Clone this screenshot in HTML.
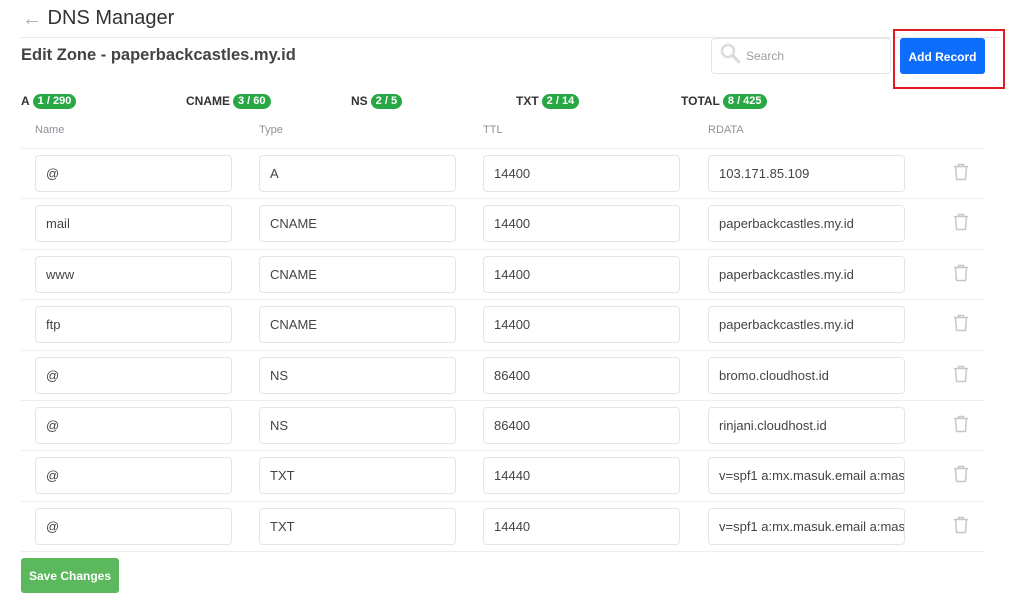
<!DOCTYPE html>
<html><head><meta charset="utf-8"><style>
*{box-sizing:border-box;margin:0;padding:0}
body{width:1024px;height:615px;background:#fff;font-family:"Liberation Sans",Arial,sans-serif;color:#333;position:relative;overflow:hidden}
.abs{position:absolute}
.inp{position:absolute;height:37px;border:1px solid #e3e5e8;border-radius:4px;font-size:13px;color:#444;padding:0 0 0 10px;line-height:35px;white-space:nowrap;overflow:hidden;width:197px}
.sep{position:absolute;left:21px;width:963px;height:1px;background:#eceef1}
.badge{display:inline-block;background:#28a745;color:#fff;font-size:11px;font-weight:bold;border-radius:8px;padding:0 5px;height:15px;line-height:15px;vertical-align:1px;margin-left:3px}
.stat{position:absolute;top:94px;font-size:12px;font-weight:bold;color:#333}
.lbl{position:absolute;top:124px;font-size:11px;color:#8a9199}
</style></head><body>
<div class="abs" style="left:22px;top:7px;font-size:20px;color:#333"><span style="color:#aaa;font-size:20px;position:relative;top:1px">&#8592;</span> DNS Manager</div>
<div class="abs" style="left:21px;top:37px;width:980px;height:1px;background:#e8e8e8"></div>
<div class="abs" style="left:21px;top:46px;font-size:16.5px;font-weight:bold;color:#444">Edit Zone - paperbackcastles.my.id</div>
<div class="abs" style="left:711px;top:38px;width:180px;height:36px;border:1px solid #e3e5e8;border-radius:4px"></div>
<svg class="abs" style="left:719px;top:42px" width="24" height="22" viewBox="0 0 24 22"><circle cx="9" cy="9" r="6" fill="none" stroke="#dadde0" stroke-width="2.5"/><path d="M13.5 13.5l6 6" stroke="#dadde0" stroke-width="3.5" stroke-linecap="round"/></svg>
<div class="abs" style="left:746px;top:49px;font-size:12px;color:#9aa0a6">Search</div>
<div class="abs" style="left:893px;top:29px;width:112px;height:60px;border:2px solid #e21b23"></div>
<div class="abs" style="left:900px;top:38px;width:85px;height:36px;background:#0d6efd;border-radius:3px;color:#fff;font-size:12px;font-weight:bold;text-align:center;line-height:39px">Add Record</div>
<div class="stat" style="left:21px">A<span class="badge">1 / 290</span></div>
<div class="stat" style="left:186px">CNAME<span class="badge">3 / 60</span></div>
<div class="stat" style="left:351px">NS<span class="badge">2 / 5</span></div>
<div class="stat" style="left:516px">TXT<span class="badge">2 / 14</span></div>
<div class="stat" style="left:681px">TOTAL<span class="badge">8 / 425</span></div>
<div class="lbl" style="left:35px">Name</div>
<div class="lbl" style="left:259px">Type</div>
<div class="lbl" style="left:483px">TTL</div>
<div class="lbl" style="left:708px">RDATA</div>
<div id="rows"></div>
<script>
var d=[["@","A","14400","103.171.85.109"],["mail","CNAME","14400","paperbackcastles.my.id"],["www","CNAME","14400","paperbackcastles.my.id"],["ftp","CNAME","14400","paperbackcastles.my.id"],["@","NS","86400","bromo.cloudhost.id"],["@","NS","86400","rinjani.cloudhost.id"],["@","TXT","14440","v=spf1 a:mx.masuk.email a:masuk.email"],["@","TXT","14440","v=spf1 a:mx.masuk.email a:masuk.email"]];
var h='',xs=[35,259,483,708];
for(var i=0;i<d.length;i++){var y=148+i*50.4;h+='<div class="sep" style="top:'+Math.round(y)+'px"></div>';
for(var j=0;j<4;j++)h+='<div class="inp" style="left:'+xs[j]+'px;top:'+Math.round(y+7)+'px">'+d[i][j]+'</div>';
h+='<svg class="abs" style="left:953px;top:'+Math.round(y+15)+'px" width="16" height="18" viewBox="0 0 16 18"><path d="M1 3.5h14M5.5 3.5V1.5h5v2M2.5 3.5l1 13h9l1-13" fill="none" stroke="#c4c8cc" stroke-width="1.5" stroke-linejoin="round"/></svg>';}
h+='<div class="sep" style="top:551px"></div>';
document.getElementById('rows').innerHTML=h;
</script>
<div class="abs" style="left:21px;top:558px;width:98px;height:35px;background:#5cb85c;border-radius:3px;color:#fff;font-size:12px;font-weight:bold;text-align:center;line-height:37px">Save Changes</div>
</body></html>
